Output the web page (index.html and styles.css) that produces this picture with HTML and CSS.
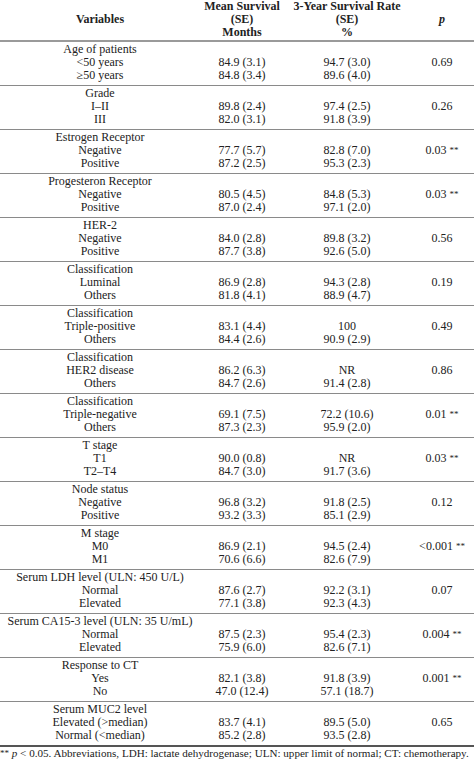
FILE: index.html
```html
<!DOCTYPE html>
<html>
<head>
<meta charset="utf-8">
<link rel="stylesheet" href="styles.css">
</head>
<body>
<div class="table">
  <div class="row head">
    <div class="cell"><div class="ln">Variables</div></div>
    <div class="cell"><div class="ln">Mean Survival</div><div class="ln">(SE)</div><div class="ln">Months</div></div>
    <div class="cell"><div class="ln">3-Year Survival Rate</div><div class="ln">(SE)</div><div class="ln">%</div></div>
    <div class="cell"><div class="ln"><i>p</i></div></div>
  </div>
  <div id="body"></div>
</div>
<div class="note"><span class="ast">**</span> <i>p</i> &lt; 0.05. Abbreviations, LDH: lactate dehydrogenase; ULN: upper limit of normal; CT: chemotherapy.</div>
<script src="app.js"></script>
</body>
</html>
```
FILE: app.js
```js
const data = [
  ["Age of patients", ["<50 years","84.9 (3.1)","94.7 (3.0)"], ["\u226550 years","84.8 (3.4)","89.6 (4.0)"], "0.69", false],
  ["Grade", ["I\u2013II","89.8 (2.4)","97.4 (2.5)"], ["III","82.0 (3.1)","91.8 (3.9)"], "0.26", false],
  ["Estrogen Receptor", ["Negative","77.7 (5.7)","82.8 (7.0)"], ["Positive","87.2 (2.5)","95.3 (2.3)"], "0.03", true],
  ["Progesteron Receptor", ["Negative","80.5 (4.5)","84.8 (5.3)"], ["Positive","87.0 (2.4)","97.1 (2.0)"], "0.03", true],
  ["HER-2", ["Negative","84.0 (2.8)","89.8 (3.2)"], ["Positive","87.7 (3.8)","92.6 (5.0)"], "0.56", false],
  ["Classification", ["Luminal","86.9 (2.8)","94.3 (2.8)"], ["Others","81.8 (4.1)","88.9 (4.7)"], "0.19", false],
  ["Classification", ["Triple-positive","83.1 (4.4)","100"], ["Others","84.4 (2.6)","90.9 (2.9)"], "0.49", false],
  ["Classification", ["HER2 disease","86.2 (6.3)","NR"], ["Others","84.7 (2.6)","91.4 (2.8)"], "0.86", false],
  ["Classification", ["Triple-negative","69.1 (7.5)","72.2 (10.6)"], ["Others","87.3 (2.3)","95.9 (2.0)"], "0.01", true],
  ["T stage", ["T1","90.0 (0.8)","NR"], ["T2\u2013T4","84.7 (3.0)","91.7 (3.6)"], "0.03", true],
  ["Node status", ["Negative","96.8 (3.2)","91.8 (2.5)"], ["Positive","93.2 (3.3)","85.1 (2.9)"], "0.12", false],
  ["M stage", ["M0","86.9 (2.1)","94.5 (2.4)"], ["M1","70.6 (6.6)","82.6 (7.9)"], "<0.001", true],
  ["Serum LDH level (ULN: 450 U/L)", ["Normal","87.6 (2.7)","92.2 (3.1)"], ["Elevated","77.1 (3.8)","92.3 (4.3)"], "0.07", false],
  ["Serum CA15-3 level (ULN: 35 U/mL)", ["Normal","87.5 (2.3)","95.4 (2.3)"], ["Elevated","75.9 (6.0)","82.6 (7.1)"], "0.004", true],
  ["Response to CT", ["Yes","82.1 (3.8)","91.8 (3.9)"], ["No","47.0 (12.4)","57.1 (18.7)"], "0.001", true],
  ["Serum MUC2 level", ["Elevated (>median)","83.7 (4.1)","89.5 (5.0)"], ["Normal (<median)","85.2 (2.8)","93.5 (2.8)"], "0.65", false]
];
const body = document.getElementById("body");
function esc(s){return s.replace(/&/g,"&amp;").replace(/</g,"&lt;").replace(/>/g,"&gt;");}
body.innerHTML = data.map(function(g){
  const p = esc(g[3]) + (g[4] ? ' <span class="ast">**</span>' : '');
  return '<div class="row grp">' +
    '<div class="cell"><div class="ln">'+esc(g[0])+'</div><div class="ln">'+esc(g[1][0])+'</div><div class="ln">'+esc(g[2][0])+'</div></div>' +
    '<div class="cell"><div class="ln">&nbsp;</div><div class="ln">'+esc(g[1][1])+'</div><div class="ln">'+esc(g[2][1])+'</div></div>' +
    '<div class="cell"><div class="ln">&nbsp;</div><div class="ln">'+esc(g[1][2])+'</div><div class="ln">'+esc(g[2][2])+'</div></div>' +
    '<div class="cell"><div class="ln">&nbsp;</div><div class="ln">'+p+'</div><div class="ln">&nbsp;</div></div>' +
    '</div>';
}).join("");
```
FILE: styles.css
```css
html, body {
  margin: 0;
  padding: 0;
  background: #fff;
}
body {
  font-family: "Liberation Serif", "DejaVu Serif", serif;
  font-size: 12px;
  color: #222;
  width: 474px;
  overflow: hidden;
}
.row {
  display: grid;
  grid-template-columns: 200px 84px 126px 64px;
}
.cell {
  text-align: center;
  white-space: nowrap;
}
.ln {
  line-height: 13px;
  height: 13px;
}
.head {
  font-weight: bold;
  padding-bottom: 1px;
  border-bottom: 2px solid #9a9a9a;
}
.head .cell:first-child,
.head .cell:last-child {
  display: flex;
  align-items: center;
  justify-content: center;
}
.grp {
  padding-top: 1px;
  padding-bottom: 3px;
  border-bottom: 1px solid #8a8a8a;
}
.grp:last-child {
  border-bottom: 2px solid #555;
}
.ast {
  font-size: 9px;
  position: relative;
  top: -1px;
}
.note {
  font-size: 11.1px;
  line-height: 13px;
  white-space: nowrap;
}
```
